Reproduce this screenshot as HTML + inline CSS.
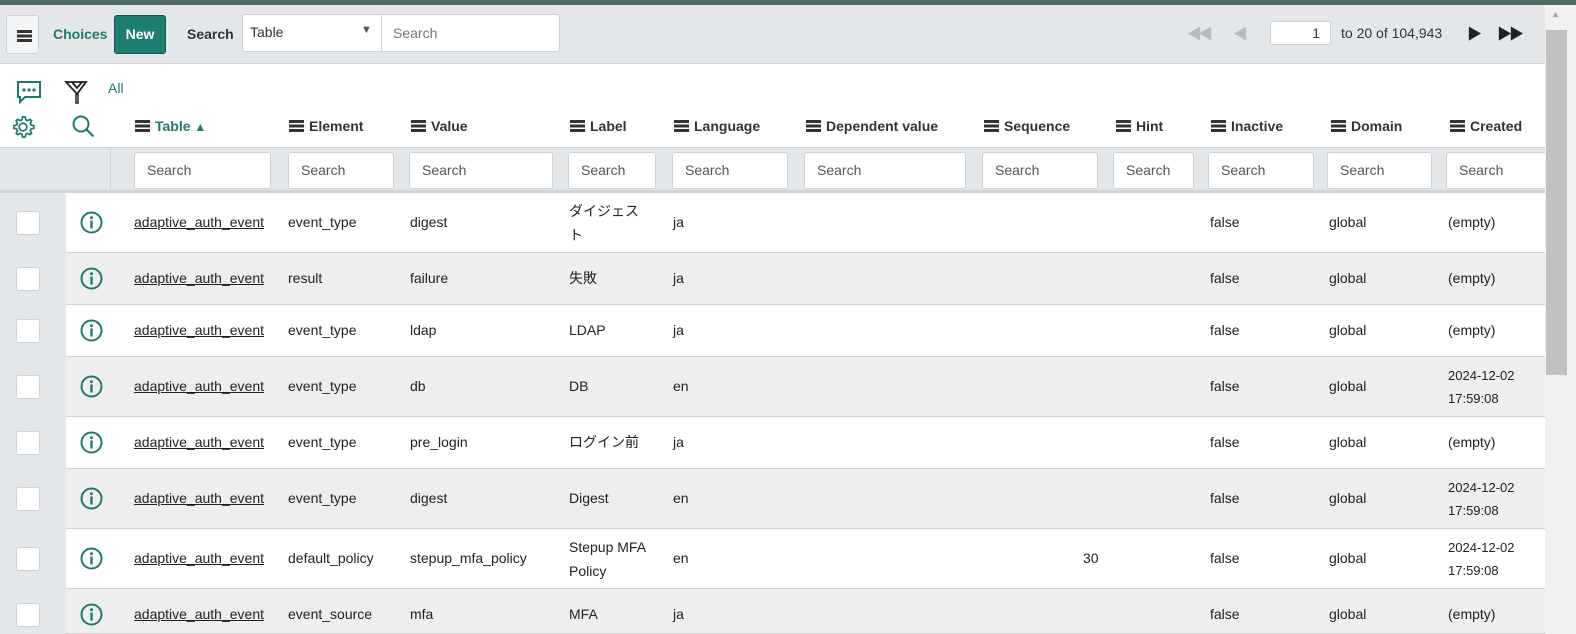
<!DOCTYPE html>
<html><head><meta charset="utf-8"><style>
*{box-sizing:border-box;margin:0;padding:0}
body{width:1576px;height:634px;overflow:hidden;background:#fff;font-family:"Liberation Sans","Noto Sans CJK JP",sans-serif;font-size:14px;color:#222;position:relative}
.a{position:absolute}
.top{left:0;top:0;width:1576px;height:5px;background:#4f6b63}
.bar{left:0;top:5px;width:1545px;height:59px;background:#e4e7ea;border-bottom:1px solid #cfd3d6}
.inp{background:#fff;border:1px solid #cfd3d6;border-radius:3px}
.ham{display:inline-block;width:15px;height:12px;vertical-align:-1px;margin-right:5px;background:linear-gradient(#333 0 3px,transparent 3px 4.5px,#333 4.5px 7.5px,transparent 7.5px 9px,#333 9px 12px)}
.hd{top:118px;font-weight:bold;font-size:14px;color:#333}
.filt{left:0;top:147px;width:1545px;height:46px;background:#e4e7ea;border-top:1px solid #cfd3d6;border-bottom:3px solid #cfd3d6}
.fs{top:152px;height:37px;background:#fff;border:1px solid #cfd3d6;border-radius:3px;color:#555;padding:9px 0 0 12px;font-size:14px}
.row{left:0;width:1545px;border-bottom:1px solid #cfd3d6}
.cb{left:16px;width:24px;height:24px;background:#fff;border:1px solid #cfd3d6;border-radius:3px}
.ck{left:0;width:66px;background:#e4e7ea}
.ic{left:80px;width:23px;height:23px}
.c{font-size:14px}
.sm{font-size:13px;line-height:23px}
u{text-decoration:underline}
</style></head><body>
<svg width="0" height="0" style="position:absolute"><defs><g id="info"><circle cx="11.5" cy="11.5" r="10" fill="none" stroke="#1f7a6e" stroke-width="2"/><circle cx="11.5" cy="6.8" r="1.5" fill="#1f7a6e"/><rect x="10.3" y="9.5" width="2.4" height="8" fill="#1f7a6e"/></g></defs></svg>
<div class="a top"></div>
<div class="a bar"></div>
<div class="a inp" style="left:6px;top:15px;width:33px;height:39px;background:#f3f4f5"></div>
<div class="a" style="left:17px;top:28px"><span class="ham" style="margin:0"></span></div>
<div class="a" style="left:53px;top:26px;color:#1f7a6e;font-weight:bold;font-size:14px">Choices</div>
<div class="a" style="left:114px;top:15px;width:52px;height:39px;background:#1f7f6f;border:1px solid #15564c;border-radius:3px;color:#fff;font-weight:bold;text-align:center;line-height:37px">New</div>
<div class="a" style="left:187px;top:26px;font-weight:bold;color:#333">Search</div>
<div class="a inp" style="left:242px;top:14px;width:318px;height:38px"></div>
<div class="a" style="left:381px;top:14px;width:1px;height:38px;background:#cfd3d6"></div>
<div class="a" style="left:250px;top:24px;color:#333">Table</div>
<div class="a" style="left:361px;top:24px;color:#555;font-size:11px">▼</div>
<div class="a" style="left:393px;top:25px;color:#777">Search</div>
<div class="a" style="left:1187px;top:23px;color:#bbb;font-size:15px;letter-spacing:-4px">◀◀</div>
<div class="a" style="left:1233px;top:23px;color:#bbb;font-size:15px">◀</div>
<div class="a inp" style="left:1270px;top:21px;width:61px;height:24px;text-align:right;padding:3px 10px 0 0;color:#333">1</div>
<div class="a" style="left:1341px;top:25px;color:#333">to 20 of 104,943</div>
<div class="a" style="left:1467px;top:23px;color:#222;font-size:15px">▶</div>
<div class="a" style="left:1497px;top:23px;color:#222;font-size:15px;letter-spacing:-3px">▶▶</div>
<div class="a" style="left:1545px;top:5px;width:31px;height:629px;background:#f1f1f1"></div>
<div class="a" style="left:1546px;top:30px;width:21px;height:345px;background:#c1c1c1"></div>
<div class="a" style="left:1551px;top:9px;color:#a3a3a3;font-size:9px">▲</div>
<svg class="a" style="left:16px;top:80px" width="28" height="24" viewBox="0 0 28 24"><path d="M2 2h22v15H9l-5 5v-5H2z" fill="none" stroke="#1f7a6e" stroke-width="2"/><circle cx="8" cy="10" r="1.6" fill="#1f7a6e"/><circle cx="13" cy="10" r="1.6" fill="#1f7a6e"/><circle cx="18" cy="10" r="1.6" fill="#1f7a6e"/></svg>
<svg class="a" style="left:64px;top:80px" width="26" height="26" viewBox="0 0 26 26"><path d="M2 2h20L13 14z M8 2l5 6 5-6" fill="none" stroke="#222" stroke-width="1.8"/><path d="M12 14v9h2v-9" fill="none" stroke="#222" stroke-width="1.5"/></svg>
<div class="a" style="left:108px;top:80px;color:#1f7a6e;font-size:14px">All</div>
<svg class="a" style="left:10px;top:114px" width="26" height="26" viewBox="0 0 24 24"><path d="M12 2.5l2 .3.6 2.5 1.6.8 2.3-1.2 1.4 1.4-1.2 2.3.8 1.6 2.5.6v2.4l-2.5.6-.8 1.6 1.2 2.3-1.4 1.4-2.3-1.2-1.6.8-.6 2.5h-2.4l-.6-2.5-1.6-.8-2.3 1.2-1.4-1.4 1.2-2.3-.8-1.6-2.5-.6v-2.4l2.5-.6.8-1.6-1.2-2.3 1.4-1.4 2.3 1.2 1.6-.8.6-2.5z" fill="none" stroke="#1f7a6e" stroke-width="1.6"/><circle cx="12" cy="12" r="3.5" fill="none" stroke="#1f7a6e" stroke-width="1.6"/></svg>
<svg class="a" style="left:71px;top:114px" width="26" height="26" viewBox="0 0 26 26"><circle cx="10" cy="10" r="7.5" fill="none" stroke="#1f7a6e" stroke-width="2"/><path d="M15.5 15.5l7 7" stroke="#1f7a6e" stroke-width="2.2"/></svg>
<div class="a hd" style="left:135px;color:#1f7a6e"><span class="ham"></span>Table <span style="font-size:12px">▲</span></div>
<div class="a hd" style="left:289px"><span class="ham"></span>Element</div>
<div class="a hd" style="left:411px"><span class="ham"></span>Value</div>
<div class="a hd" style="left:570px"><span class="ham"></span>Label</div>
<div class="a hd" style="left:674px"><span class="ham"></span>Language</div>
<div class="a hd" style="left:806px"><span class="ham"></span>Dependent value</div>
<div class="a hd" style="left:984px"><span class="ham"></span>Sequence</div>
<div class="a hd" style="left:1116px"><span class="ham"></span>Hint</div>
<div class="a hd" style="left:1211px"><span class="ham"></span>Inactive</div>
<div class="a hd" style="left:1331px"><span class="ham"></span>Domain</div>
<div class="a hd" style="left:1450px"><span class="ham"></span>Created</div>
<div class="a filt"></div>
<div class="a" style="left:110px;top:147px;width:1px;height:43px;background:#cfd3d6"></div>
<div class="a fs" style="left:134px;width:137px">Search</div>
<div class="a fs" style="left:288px;width:106px">Search</div>
<div class="a fs" style="left:409px;width:144px">Search</div>
<div class="a fs" style="left:568px;width:88px">Search</div>
<div class="a fs" style="left:672px;width:116px">Search</div>
<div class="a fs" style="left:804px;width:162px">Search</div>
<div class="a fs" style="left:982px;width:116px">Search</div>
<div class="a fs" style="left:1113px;width:81px">Search</div>
<div class="a fs" style="left:1208px;width:106px">Search</div>
<div class="a fs" style="left:1327px;width:105px">Search</div>
<div class="a fs" style="left:1446px;width:99px;border-right:none">Search</div>

<div class="a row" style="top:193px;height:60px;background:#fff"></div>
<div class="a row" style="top:253px;height:52px;background:#eee"></div>
<div class="a row" style="top:305px;height:52px;background:#fff"></div>
<div class="a row" style="top:357px;height:60px;background:#eee"></div>
<div class="a row" style="top:417px;height:52px;background:#fff"></div>
<div class="a row" style="top:469px;height:60px;background:#eee"></div>
<div class="a row" style="top:529px;height:60px;background:#fff"></div>
<div class="a row" style="top:589px;height:45px;background:#eee"></div>
<div class="a ck" style="top:193px;height:441px"></div>

<div class="a cb" style="top:211px"></div><svg class="a ic" style="top:211px"><use href="#info"/></svg>
<div class="a c" style="left:134px;top:214px"><u>adaptive_auth_event</u></div><div class="a c" style="left:288px;top:214px">event_type</div><div class="a c" style="left:410px;top:214px">digest</div><div class="a c" style="left:569px;top:199px;line-height:24px">ダイジェス<br>ト</div><div class="a c" style="left:673px;top:214px">ja</div><div class="a c" style="left:1210px;top:214px">false</div><div class="a c" style="left:1329px;top:214px">global</div><div class="a c" style="left:1448px;top:214px">(empty)</div>

<div class="a cb" style="top:267px"></div><svg class="a ic" style="top:267px"><use href="#info"/></svg>
<div class="a c" style="left:134px;top:270px"><u>adaptive_auth_event</u></div><div class="a c" style="left:288px;top:270px">result</div><div class="a c" style="left:410px;top:270px">failure</div><div class="a c" style="left:569px;top:268px">失敗</div><div class="a c" style="left:673px;top:270px">ja</div><div class="a c" style="left:1210px;top:270px">false</div><div class="a c" style="left:1329px;top:270px">global</div><div class="a c" style="left:1448px;top:270px">(empty)</div>

<div class="a cb" style="top:319px"></div><svg class="a ic" style="top:319px"><use href="#info"/></svg>
<div class="a c" style="left:134px;top:322px"><u>adaptive_auth_event</u></div><div class="a c" style="left:288px;top:322px">event_type</div><div class="a c" style="left:410px;top:322px">ldap</div><div class="a c" style="left:569px;top:322px">LDAP</div><div class="a c" style="left:673px;top:322px">ja</div><div class="a c" style="left:1210px;top:322px">false</div><div class="a c" style="left:1329px;top:322px">global</div><div class="a c" style="left:1448px;top:322px">(empty)</div>

<div class="a cb" style="top:375px"></div><svg class="a ic" style="top:375px"><use href="#info"/></svg>
<div class="a c" style="left:134px;top:378px"><u>adaptive_auth_event</u></div><div class="a c" style="left:288px;top:378px">event_type</div><div class="a c" style="left:410px;top:378px">db</div><div class="a c" style="left:569px;top:378px">DB</div><div class="a c" style="left:673px;top:378px">en</div><div class="a c" style="left:1210px;top:378px">false</div><div class="a c" style="left:1329px;top:378px">global</div><div class="a sm" style="left:1448px;top:364px">2024-12-02<br>17:59:08</div>

<div class="a cb" style="top:431px"></div><svg class="a ic" style="top:431px"><use href="#info"/></svg>
<div class="a c" style="left:134px;top:434px"><u>adaptive_auth_event</u></div><div class="a c" style="left:288px;top:434px">event_type</div><div class="a c" style="left:410px;top:434px">pre_login</div><div class="a c" style="left:569px;top:432px">ログイン前</div><div class="a c" style="left:673px;top:434px">ja</div><div class="a c" style="left:1210px;top:434px">false</div><div class="a c" style="left:1329px;top:434px">global</div><div class="a c" style="left:1448px;top:434px">(empty)</div>

<div class="a cb" style="top:487px"></div><svg class="a ic" style="top:487px"><use href="#info"/></svg>
<div class="a c" style="left:134px;top:490px"><u>adaptive_auth_event</u></div><div class="a c" style="left:288px;top:490px">event_type</div><div class="a c" style="left:410px;top:490px">digest</div><div class="a c" style="left:569px;top:490px">Digest</div><div class="a c" style="left:673px;top:490px">en</div><div class="a c" style="left:1210px;top:490px">false</div><div class="a c" style="left:1329px;top:490px">global</div><div class="a sm" style="left:1448px;top:476px">2024-12-02<br>17:59:08</div>

<div class="a cb" style="top:547px"></div><svg class="a ic" style="top:547px"><use href="#info"/></svg>
<div class="a c" style="left:134px;top:550px"><u>adaptive_auth_event</u></div><div class="a c" style="left:288px;top:550px">default_policy</div><div class="a c" style="left:410px;top:550px">stepup_mfa_policy</div><div class="a c" style="left:569px;top:535px;line-height:24px">Stepup MFA<br>Policy</div><div class="a c" style="left:673px;top:550px">en</div><div class="a c" style="left:1083px;top:550px">30</div><div class="a c" style="left:1210px;top:550px">false</div><div class="a c" style="left:1329px;top:550px">global</div><div class="a sm" style="left:1448px;top:536px">2024-12-02<br>17:59:08</div>

<div class="a cb" style="top:603px"></div><svg class="a ic" style="top:603px"><use href="#info"/></svg>
<div class="a c" style="left:134px;top:606px"><u>adaptive_auth_event</u></div><div class="a c" style="left:288px;top:606px">event_source</div><div class="a c" style="left:410px;top:606px">mfa</div><div class="a c" style="left:569px;top:606px">MFA</div><div class="a c" style="left:673px;top:606px">ja</div><div class="a c" style="left:1210px;top:606px">false</div><div class="a c" style="left:1329px;top:606px">global</div><div class="a c" style="left:1448px;top:606px">(empty)</div>
</body></html>
